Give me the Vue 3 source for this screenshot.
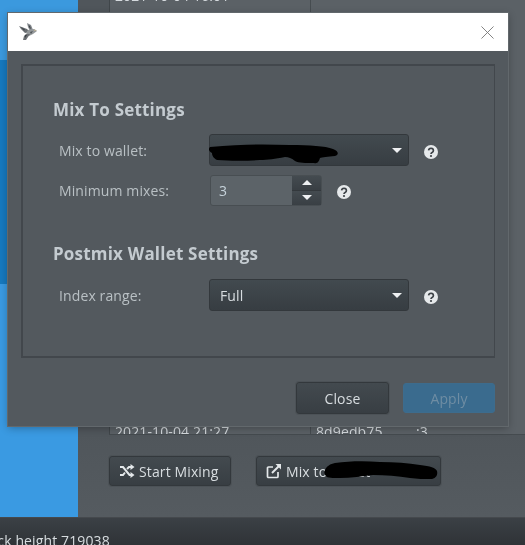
<script setup>
const rows = [
  { date: '2021-10-04 16:01' },
  { date: '2021-10-04 21:27', hash: '8d9edb75', idx: ':3' },
]
</script>

<template>
  <div class="app">
    <div class="main">
      <aside class="sidebar"></aside>
      <section class="content">
        <div class="table">
          <div class="col col-date">
            <div class="row row-top">{{ rows[0].date }}</div>
            <div class="row row-bottom">{{ rows[1].date }}</div>
          </div>
          <div class="col col-hash">
            <div class="row row-top"></div>
            <div class="row row-bottom">
              <span class="cell-hash">{{ rows[1].hash }}</span>
              <span>{{ rows[1].idx }}</span>
            </div>
          </div>
        </div>
        <div class="footer">
          <button class="btn start">
            <svg class="btn-icon" viewBox="0 0 16 16"><path d="M1 4h3l6.500 8H12M1 12h3l2-2.500M8 6l2-2h2" fill="none" stroke="#e4e8ea" stroke-width="2"/><path d="M11.500 1l4 3-4 3zM11.500 9l4 3-4 3z" fill="#e4e8ea"/></svg>
            Start Mixing
          </button>
          <button class="btn mix">
            <svg class="btn-icon" viewBox="0 0 16 16"><path d="M12 9v4.500a1 1 0 0 1-1 1H2.500a1 1 0 0 1-1-1V5a1 1 0 0 1 1-1H7" fill="none" stroke="#e4e8ea" stroke-width="1.700"/><path d="M6 10l7-7" fill="none" stroke="#e4e8ea" stroke-width="2"/><path d="M9.500 1H15v5.500z" fill="#e4e8ea"/></svg>
            Mix to wallet
          </button>
        </div>
      </section>
    </div>
    <footer class="status"><span class="status-text">Block height 719038</span></footer>

    <div class="dialog">
      <header class="titlebar">
        <svg class="bird" viewBox="0 0 20 20">
          <path d="M1 4L9 7L12 10L7 11L3 7Z" fill="#6a6e72"/>
          <path d="M9 1L13 3L15 8L12 9L10 5Z" fill="#83888c"/>
          <path d="M10 8L16 7L19 9L15 12L11 14L8 11Z" fill="#94989a"/>
          <path d="M8 12L12 12L8 18L5 18L6 14Z" fill="#6c7074"/>
          <path d="M16 7L19 9L16 9Z" fill="#b8ae96"/>
          <path d="M3 5L7 7.500L6 8.500ZM10.500 3L12 4L13 7L11.500 6ZM7 13L9 13L7 16Z" fill="#3c4145"/>
          <path d="M12 10L15 9L13 12Z" fill="#4c5155"/>
        </svg>
        <svg class="close" viewBox="0 0 14 14"><path d="M.5.5l13 13M13.500.5l-13 13" stroke="#7a7a7a" stroke-width="1" fill="none"/></svg>
      </header>
      <div class="dialog-body">
        <div class="panel">
          <h2 class="heading first">Mix To Settings</h2>
          <div class="field">
            <label class="label">Mix to wallet:</label>
            <div class="select"><span></span><i class="caret"></i></div>
            <svg class="help" viewBox="0 0 14 14"><circle cx="7" cy="7" r="7" fill="#e6e9eb"/><path d="M4.600 5.400a2.400 2.200 0 1 1 3.600 2c-.8.500-1.200.8-1.200 1.600" fill="none" stroke="#3c4146" stroke-width="1.700"/><circle cx="7" cy="11" r="1.100" fill="#3c4146"/></svg>
          </div>
          <div class="field field-spin">
            <label class="label">Minimum mixes:</label>
            <div class="spinner">
              <span class="spin-value">3</span>
              <div class="spin-btns">
                <span class="spin-btn"><i class="caret up"></i></span>
                <span class="spin-btn"><i class="caret"></i></span>
              </div>
            </div>
            <svg class="help" viewBox="0 0 14 14"><circle cx="7" cy="7" r="7" fill="#e6e9eb"/><path d="M4.600 5.400a2.400 2.200 0 1 1 3.600 2c-.8.500-1.200.8-1.200 1.600" fill="none" stroke="#3c4146" stroke-width="1.700"/><circle cx="7" cy="11" r="1.100" fill="#3c4146"/></svg>
          </div>
          <h2 class="heading second">Postmix Wallet Settings</h2>
          <div class="field">
            <label class="label">Index range:</label>
            <div class="select"><span>Full</span><i class="caret"></i></div>
            <svg class="help" viewBox="0 0 14 14"><circle cx="7" cy="7" r="7" fill="#e6e9eb"/><path d="M4.600 5.400a2.400 2.200 0 1 1 3.600 2c-.8.500-1.200.8-1.200 1.600" fill="none" stroke="#3c4146" stroke-width="1.700"/><circle cx="7" cy="11" r="1.100" fill="#3c4146"/></svg>
          </div>
        </div>
        <div class="actions">
          <button class="btn close-btn">Close</button>
          <button class="btn apply-btn">Apply</button>
        </div>
      </div>
    </div>

    <svg class="redact" viewBox="0 0 525 545">
      <path d="M210 147C240 144 265 144 290 145C310 145 325 146 333 149C339 151 339 155 335 156C328 157 322 157 320 158C319 161 318 164 314 163C305 163 299 163 295 161C291 158 289 157 285 157C275 159 268 160 260 160C245 161 230 161 217 160C213 158 212 155 212 153C209 151 208 149 210 147Z" fill="#000"/>
      <path d="M325 470C327 466 330 464 335 463C350 461 365 461 380 462C395 462 408 463 420 465C430 466 436 468 437 471C438 475 436 478 432 479C424 479 417 479 410 478C398 476 385 475 373 475C362 476 351 478 340 478C333 478 327 478 326 476C324 474 324 472 325 470Z" fill="#000"/>
    </svg>
  </div>
</template>

<style scoped>
.app {
  position: relative;
  width: 525px;
  height: 545px;
  overflow: hidden;
  display: flex;
  flex-direction: column;
  font-family: "Open Sans", "Noto Sans", sans-serif;
  font-size: 14px;
  letter-spacing: .12px;
  color: #d8dde0;
  background: #555b60;
  filter: blur(0.45px);
}
.main { flex: 1; display: flex; min-height: 0; }
.sidebar {
  width: 78px;
  flex: none;
  background: linear-gradient(#3b99de 0 60px, #1679bf 60px 284px, #3a9ae2 284px);
}
.content {
  flex: 1;
  min-width: 0;
  display: flex;
  flex-direction: column;
  background: #50565b;
}
.table {
  height: 434px;
  margin-left: 31px;
  background: #5b6166;
  border-left: 1px solid #40464a;
  border-bottom: 1px solid #454b4f;
  display: flex;
  overflow: hidden;
  flex: none;
}
.col {
  display: flex;
  flex-direction: column;
  justify-content: space-between;
}
.col-date { width: 200px; flex: none; border-right: 1px solid #464c50; }
.col-hash { flex: 1; }
.row {
  display: flex;
  height: 19px;
  align-items: center;
  padding-left: 5px;
  color: #d5dade;
  white-space: nowrap;
}
.row-top { margin-top: -14px; }
.row-bottom { margin-bottom: -7px; }
.cell-hash { width: 100px; }
.footer {
  flex: 1;
  display: flex;
  gap: 25px;
  padding: 21px 0 0 31px;
  align-items: flex-start;
  background: linear-gradient(#50565b, #555b60);
}
.btn {
  font: inherit;
  letter-spacing: inherit;
  color: #d8dde0;
  height: 30px;
  border: 1px solid #33383c;
  border-radius: 3px;
  background: linear-gradient(#434a4f, #383e43);
  display: flex;
  align-items: center;
  justify-content: center;
  gap: 4px;
  padding: 0;
  box-shadow: 0 0 0 1px rgba(70, 76, 80, .5);
}
.start { width: 122px; justify-content: flex-start; padding-left: 9px; }
.mix { width: 185px; justify-content: flex-start; padding-left: 9px; }
.btn-icon { width: 16px; height: 16px; flex: none; }
.status {
  height: 28px;
  flex: none;
  background: linear-gradient(#3b4045, #2f3337);
  border-top: 1px solid #45494d;
  box-sizing: border-box;
  overflow: hidden;
}
.status-text {
  display: block;
  margin: 13px 0 0 -24px;
  color: #d8dde0;
  white-space: nowrap;
  line-height: 19px;
}

.dialog {
  position: absolute;
  left: 8px;
  top: 13px;
  width: 500px;
  height: 413px;
  display: flex;
  flex-direction: column;
  box-shadow: 0 2px 8px rgba(0, 0, 0, .3);
  background: #53595e;
  outline: 1px solid #62686c;
}
.titlebar {
  height: 38px;
  flex: none;
  background: #fff;
  display: flex;
  align-items: center;
  justify-content: space-between;
  padding: 0 14px 0 10px;
}
.bird { width: 20px; height: 20px; }
.close { width: 13px; height: 13px; }
.dialog-body {
  flex: 1;
  display: flex;
  flex-direction: column;
  padding: 13px 13px 0;
  min-height: 0;
}
.panel {
  height: 294px;
  box-sizing: border-box;
  border: 2px solid #42474c;
  border-width: 2px 1px 2px 2px;
  padding: 0 0 0 30px;
  flex: none;
}
.heading {
  margin: 0;
  font-size: 17px;
  letter-spacing: .2px;
  font-weight: 700;
  line-height: 20px;
  color: #c4cbd0;
}
.heading.first { margin-top: 34px; margin-bottom: 14px; }
.heading.second { margin-top: 38px; margin-bottom: 15px; }
.field {
  display: flex;
  align-items: center;
  height: 32px;
}
.field-spin { margin-top: 8px; }
.label {
  width: 156px;
  flex: none;
  padding: 1px 0 0 6px;
  box-sizing: border-box;
  color: #b9c0c4;
}
.select {
  width: 200px;
  height: 32px;
  box-sizing: border-box;
  border: 1px solid #33383c;
  border-radius: 3px;
  background: linear-gradient(#424a4f, #373d42);
  display: flex;
  align-items: center;
  justify-content: space-between;
  padding: 0 6px 0 10px;
  color: #d8dde0;
}
.caret {
  display: block;
  width: 0;
  height: 0;
  border-left: 5px solid transparent;
  border-right: 5px solid transparent;
  border-top: 5px solid #eef0f2;
}
.caret.up { border-top: none; border-bottom: 5px solid #eef0f2; }
.help { width: 14px; height: 14px; margin: 3px 0 0 15px; flex: none; }
.spinner {
  width: 112px;
  height: 31px;
  display: flex;
  border: 1px solid #484e52;
  border-radius: 3px;
  box-sizing: border-box;
  background: #5c6368;
  margin-left: 1px;
}
.spin-value { flex: 1; padding-left: 8px; line-height: 29px; color: #c6d2da; }
.spin-btns {
  width: 29px;
  display: flex;
  flex-direction: column;
  gap: 1px;
  background: #33383c;
}
.spin-btn {
  flex: 1;
  display: flex;
  align-items: center;
  justify-content: center;
  background: linear-gradient(#444b50, #393f44);
}
.actions {
  display: flex;
  justify-content: flex-end;
  align-items: center;
  gap: 14px;
  margin-top: 24px;
}
.close-btn { width: 93px; height: 32px; }
.apply-btn {
  width: 92px;
  height: 30px;
  background: #3a6b8e;
  border-color: #3d6c8d;
  color: #6f8da3;
  box-shadow: none;
}
.redact {
  position: absolute;
  inset: 0;
  width: 525px;
  height: 545px;
  pointer-events: none;
}
</style>
